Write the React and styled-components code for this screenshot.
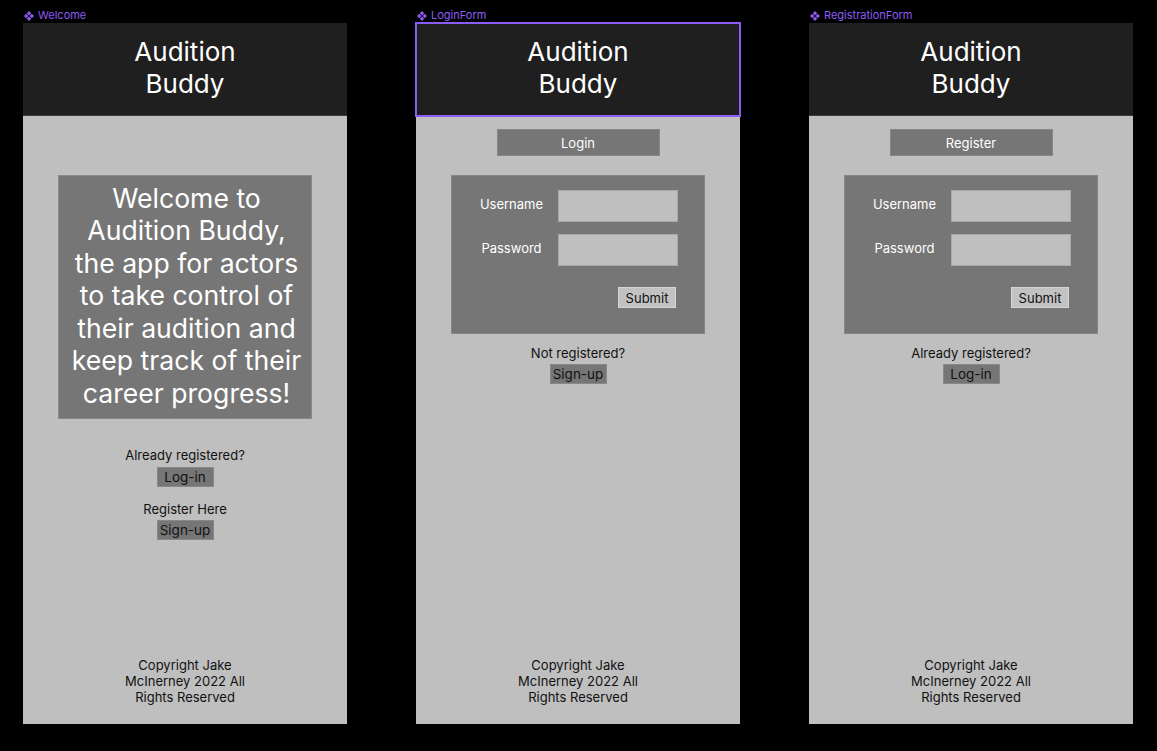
import styled, { createGlobalStyle } from "styled-components";

const Global = createGlobalStyle`
  html, body {
    margin: 0;
    background: #000;
  }
  body {
    font-family: Inter, "Noto Sans", sans-serif;
  }
`;

const Canvas = styled.div`
  display: flex;
  gap: 69px;
  padding: 8px 0 0 23px;
  width: 1157px;
  height: 751px;
  box-sizing: border-box;
  background: #000;
`;

const Column = styled.div`
  display: flex;
  flex-direction: column;
  width: 324px;
`;

const FrameLabel = styled.div`
  display: flex;
  align-items: center;
  gap: 4px;
  height: 15px;
  padding-left: 1px;
  font-size: 11px;
  color: #8c5cf5;
  line-height: 15px;

  svg {
    flex: none;
  }
`;

const Frame = styled.div`
  display: flex;
  flex-direction: column;
  height: 701px;
  background: #bfbfbf;
`;

const Header = styled.div`
  height: 93px;
  flex: none;
  box-sizing: border-box;
  display: flex;
  align-items: center;
  justify-content: center;
  padding-bottom: 3px;
  text-align: center;
  background: #1f1f1f;
  border-bottom: 1px solid #3a3a3a;
  color: #fff;
  font-size: 26px;
  line-height: 32px;
  outline: ${(p) => (p.$selected ? "2px solid #8b5cf6" : "none")};
  outline-offset: -1px;
`;

const Body = styled.div`
  flex: 1;
  display: flex;
  flex-direction: column;
  align-items: center;
  padding-top: ${(p) => p.$top || 13}px;
  padding-bottom: 19px;
`;

const WelcomeBox = styled.div`
  width: 254px;
  height: 244px;
  box-sizing: border-box;
  display: flex;
  align-items: center;
  justify-content: center;
  padding: 0 0 3px 3px;
  text-align: center;
  background: #767676;
  border: 1px solid #8a8a8a;
  color: #fff;
  font-size: 26.6px;
  line-height: 32.4px;
`;

const Prompt = styled.div`
  margin-top: ${(p) => p.$mt || 0}px;
  font-size: 13px;
  line-height: 16px;
  color: #111;
  text-align: center;
`;

const LinkButton = styled.div`
  margin-top: ${(p) => p.$mt || 3}px;
  width: 57px;
  height: 20px;
  display: flex;
  align-items: center;
  justify-content: center;
  background: #767676;
  border: 1px solid #888;
  box-sizing: border-box;
  font-size: 13.5px;
  color: #111;
`;

const TitleBar = styled.div`
  width: 163px;
  height: 27px;
  box-sizing: border-box;
  display: flex;
  align-items: center;
  justify-content: center;
  background: #767676;
  border: 1px solid #868686;
  color: #fff;
  font-size: 13px;
`;

const FormBox = styled.div`
  margin-top: 19px;
  width: 254px;
  height: 159px;
  box-sizing: border-box;
  display: grid;
  grid-template-columns: 1fr 120px;
  column-gap: 8px;
  row-gap: 12px;
  align-content: start;
  align-items: center;
  padding: 14px 26px 0 21px;
  background: #767676;
  border: 1px solid #868686;
`;

const FieldLabel = styled.div`
  text-align: center;
  color: #fff;
  font-size: 13px;
  margin-top: -4px;
`;

const Input = styled.div`
  height: 32px;
  background: #bfbfbf;
  border: 1px solid #a8a8a8;
  box-sizing: border-box;
`;

const Submit = styled.div`
  grid-column: 2;
  justify-self: end;
  margin: 9px 2px 0 0;
  width: 58px;
  height: 21px;
  box-sizing: border-box;
  display: flex;
  align-items: center;
  justify-content: center;
  background: #c2c2c2;
  border: 1px solid #d6d6d6;
  font-size: 13px;
  color: #111;
`;

const Footer = styled.div`
  margin-top: auto;
  font-size: 13px;
  line-height: 16px;
  color: #111;
  text-align: center;
`;

const ComponentIcon = () => (
  <svg width="10" height="10" viewBox="0 0 10 10">
    <g fill="#8c5cf5">
      <path d="M5 0 L7.2 2.2 L5 4.4 L2.8 2.2 Z" />
      <path d="M5 5.6 L7.2 7.8 L5 10 L2.8 7.8 Z" />
      <path d="M2.2 2.8 L4.4 5 L2.2 7.2 L0 5 Z" />
      <path d="M7.8 2.8 L10 5 L7.8 7.2 L5.6 5 Z" />
    </g>
  </svg>
);

const Copyright = () => (
  <Footer>
    Copyright Jake
    <br />
    McInerney 2022 All
    <br />
    Rights Reserved
  </Footer>
);

const AppHeader = ({ selected }) => (
  <Header $selected={selected}>
    Audition
    <br />
    Buddy
  </Header>
);

const CredentialsForm = () => (
  <FormBox>
    <FieldLabel>Username</FieldLabel>
    <Input />
    <FieldLabel>Password</FieldLabel>
    <Input />
    <Submit>Submit</Submit>
  </FormBox>
);

export default function App() {
  return (
    <>
      <Global />
      <Canvas>
        <Column>
          <FrameLabel>
            <ComponentIcon />
            Welcome
          </FrameLabel>
          <Frame>
            <AppHeader />
            <Body $top={59}>
              <WelcomeBox>
                Welcome to
                <br />
                Audition Buddy,
                <br />
                the app for actors
                <br />
                to take control of
                <br />
                their audition and
                <br />
                keep track of their
                <br />
                career progress!
              </WelcomeBox>
              <Prompt $mt={28}>Already registered?</Prompt>
              <LinkButton $mt={4}>Log-in</LinkButton>
              <Prompt $mt={14}>Register Here</Prompt>
              <LinkButton>Sign-up</LinkButton>
              <Copyright />
            </Body>
          </Frame>
        </Column>

        <Column>
          <FrameLabel>
            <ComponentIcon />
            LoginForm
          </FrameLabel>
          <Frame>
            <AppHeader selected />
            <Body>
              <TitleBar>Login</TitleBar>
              <CredentialsForm />
              <Prompt $mt={11}>Not registered?</Prompt>
              <LinkButton>Sign-up</LinkButton>
              <Copyright />
            </Body>
          </Frame>
        </Column>

        <Column>
          <FrameLabel>
            <ComponentIcon />
            RegistrationForm
          </FrameLabel>
          <Frame>
            <AppHeader />
            <Body>
              <TitleBar>Register</TitleBar>
              <CredentialsForm />
              <Prompt $mt={11}>Already registered?</Prompt>
              <LinkButton>Log-in</LinkButton>
              <Copyright />
            </Body>
          </Frame>
        </Column>
      </Canvas>
    </>
  );
}
